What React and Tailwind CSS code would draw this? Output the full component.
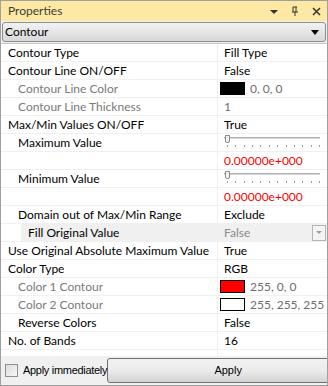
import React from "react";

const rows = [
  { label: "Contour Type", value: "Fill Type", level: 0 },
  { label: "Contour Line ON/OFF", value: "False", level: 0 },
  { label: "Contour Line Color", value: "0, 0, 0", swatch: "#000000", level: 1, dim: true },
  { label: "Contour Line Thickness", value: "1", level: 1, dim: true },
  { label: "Max/Min Values ON/OFF", value: "True", level: 0 },
  { label: "Maximum Value", slider: true, level: 1 },
  { label: "", value: "0.00000e+000", red: true, level: 1 },
  { label: "Minimum Value", slider: true, level: 1 },
  { label: "", value: "0.00000e+000", red: true, level: 1 },
  { label: "Domain out of Max/Min Range", value: "Exclude", level: 1 },
  { label: "Fill Original Value", value: "False", level: 2, shaded: true },
  { label: "Use Original Absolute Maximum Value", value: "True", level: 0 },
  { label: "Color Type", value: "RGB", level: 0 },
  { label: "Color 1 Contour", value: "255, 0, 0", swatch: "#ff0000", level: 1, dim: true },
  { label: "Color 2 Contour", value: "255, 255, 255", swatch: "#ffffff", level: 1, dim: true },
  { label: "Reverse Colors", value: "False", level: 1 },
  { label: "No. of Bands", value: "16", level: 0 },
];

const pad = ["pl-[7px]", "pl-[17px]", "pl-[7px]"];

const Slider = () => (
  <div className="relative w-[96px] h-[18px] ml-[6px]">
    <div className="absolute left-0 right-0 top-[3px] h-[2px] bg-[#d6d6d6] border-t border-[#b0b0b0]" />
    <div className="absolute left-[1px] top-[1px] w-[5px] h-[8px] bg-[#f4f4f4] border border-[#8a8a8a] rounded-b-[2px]" />
    <div className="absolute left-[3px] right-0 top-[11px] flex justify-between">
      {Array.from({ length: 12 }).map((_, i) => (
        <div key={i} className="w-px h-[2px] bg-[#a0a0a0]" />
      ))}
    </div>
  </div>
);

const Row = ({ r }) => (
  <div className="flex h-[18px] border-b border-[#f0f0f0]">
    <div className={`w-[217px] shrink-0 border-r border-[#f0f0f0] flex items-center ${pad[r.level]} ${r.dim ? "text-[#7a7a7a]" : "text-black"}`}>
      {r.shaded ? (
        <div className="ml-[13px] pl-[7px] h-full flex items-center bg-[#f0f0f0] flex-1 whitespace-nowrap">{r.label}</div>
      ) : (
        <span className="whitespace-nowrap overflow-hidden">{r.label}</span>
      )}
    </div>
    <div className={`flex-1 flex items-center ${r.shaded ? "bg-[#f0f0f0]" : ""}`}>
      {r.slider ? (
        <Slider />
      ) : r.swatch ? (
        <div className="flex items-center pl-[2px]">
          <div className="w-[25px] h-[13px] border border-black" style={{ background: r.swatch }} />
          <span className="ml-[5px] text-[#6d6d6d]">{r.value}</span>
        </div>
      ) : (
        <div className="flex-1 flex items-center justify-between">
          <span
            className={`pl-[6px] ${
              r.red ? "text-[#ff0000]" : r.shaded ? "text-[#8a8a8a]" : r.dim ? "text-[#6d6d6d]" : "text-black"
            }`}
          >
            {r.value}
          </span>
          {r.shaded && (
            <div className="w-[14px] h-[16px] mr-px border border-[#b4b4b4] bg-[#f4f4f4] flex items-center justify-center">
              <div className="w-0 h-0 border-l-[3px] border-r-[3px] border-t-[3px] border-l-transparent border-r-transparent border-t-[#a0a0a0]" />
            </div>
          )}
        </div>
      )}
    </div>
  </div>
);

export default function App() {
  return (
    <div
      className="w-[328px] h-[386px] bg-[#f0f0f0] border border-[#a0a0a0] flex flex-col text-[12px] overflow-hidden"
      style={{ fontFamily: 'Lato, "Noto Sans", sans-serif' }}
    >
      {/* Title bar */}
      <div className="h-[20px] bg-[#fde8a4] flex items-center pl-[7px] pr-[6px] text-[#3d3d3d] shrink-0">
        <span className="flex-1 text-[12px]">Properties</span>
        <svg width="10" height="6" viewBox="0 0 10 6" className="mr-[12px] mt-[2px]">
          <path d="M1 1h8L5 5z" fill="#333" />
        </svg>
        <svg width="8" height="10" viewBox="0 0 8 10" className="mr-[13px]">
          <path d="M2 1h4M2 1v5M5 1v5M1 6h6M4 6v4" stroke="#333" strokeWidth="1" fill="none" />
        </svg>
        <svg width="9" height="9" viewBox="0 0 9 9">
          <path d="M1 1l7 7M8 1l-7 7" stroke="#333" strokeWidth="1.5" />
        </svg>
      </div>

      {/* Object selector */}
      <div className="mx-px mt-px h-[20px] rounded-[3px] border border-[#8e8f8f] bg-gradient-to-b from-[#f2f2f2] to-[#d8d8d8] flex items-center pl-[2px] pr-[6px] shrink-0">
        <span className="flex-1 text-black">Contour</span>
        <svg width="8" height="5" viewBox="0 0 8 5">
          <path d="M0 0h8L4 5z" fill="#000" />
        </svg>
      </div>

      {/* Grid */}
      <div className="mt-[1px] bg-white h-[313px] shrink-0 border-t border-[#c8c8c8] flex flex-col">
        {rows.map((r, i) => (
          <Row key={i} r={r} />
        ))}
        <div className="flex flex-1">
          <div className="w-[217px] border-r border-[#f0f0f0]" />
        </div>
      </div>

      {/* Bottom bar */}
      <div
        className="flex-1 flex items-center pl-[4px] pr-px"
        style={{ fontFamily: '"Liberation Sans", sans-serif' }}
      >
        <div className="w-[13px] h-[13px] shrink-0 border border-[#8e8f8f] bg-gradient-to-br from-[#dcdcdc] to-[#f8f8f8]" />
        <span className="relative z-10 ml-[5px] text-[11px] tracking-[-0.3px] text-black whitespace-nowrap">Apply immediately</span>
        <div className="ml-auto shrink-0 w-[242px] h-[25px] rounded-[3px] border border-[#707070] bg-gradient-to-b from-[#f2f2f2] via-[#ebebeb] to-[#d4d4d4] flex items-center justify-center text-black text-[11px]">
          Apply
        </div>
      </div>
    </div>
  );
}
